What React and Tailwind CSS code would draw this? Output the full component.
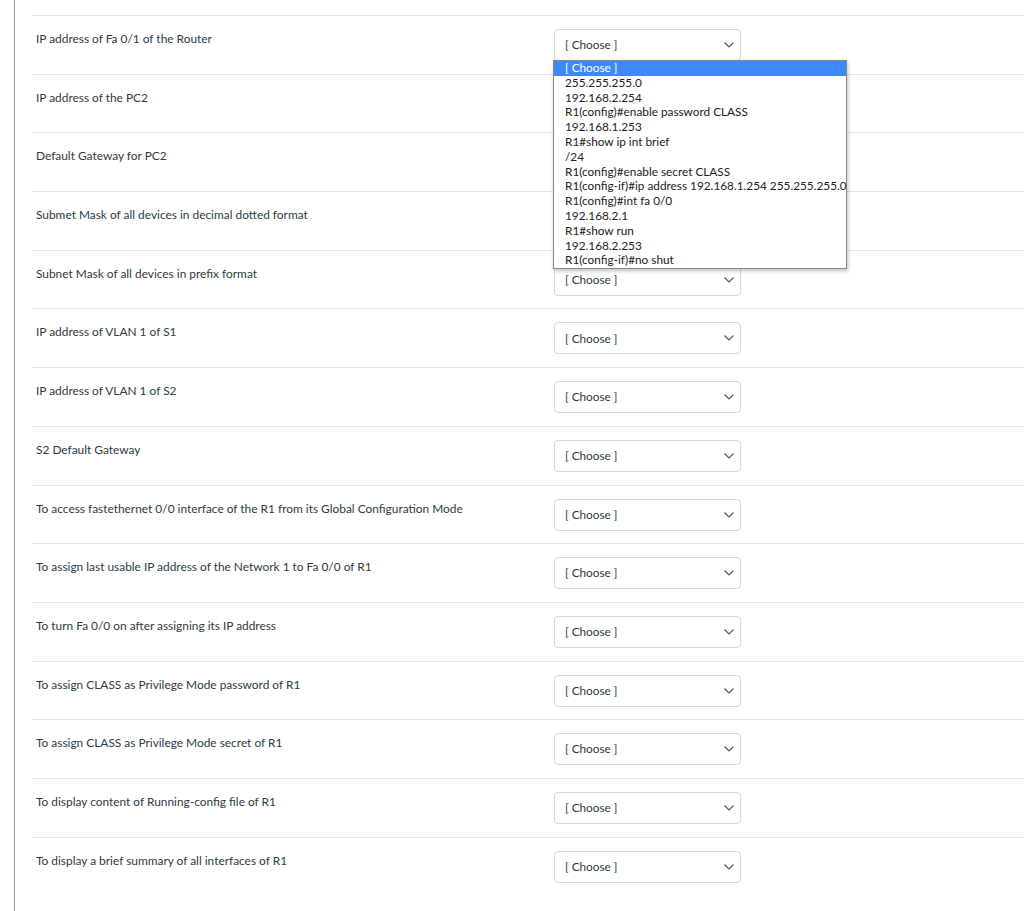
import React from 'react';

const questions = [
  'IP address of Fa 0/1 of the Router',
  'IP address of the PC2',
  'Default Gateway for PC2',
  'Submet Mask of all devices in decimal dotted format',
  'Subnet Mask of all devices in prefix format',
  'IP address of VLAN 1 of S1',
  'IP address of VLAN 1 of S2',
  'S2 Default Gateway',
  'To access fastethernet 0/0 interface of the R1 from its Global Configuration Mode',
  'To assign last usable IP address of the Network 1 to Fa 0/0 of R1',
  'To turn Fa 0/0 on after assigning its IP address',
  'To assign CLASS as Privilege Mode password of R1',
  'To assign CLASS as Privilege Mode secret of R1',
  'To display content of Running-config file of R1',
  'To display a brief summary of all interfaces of R1',
];

const options = [
  '[ Choose ]',
  '255.255.255.0',
  '192.168.2.254',
  'R1(config)#enable password CLASS',
  '192.168.1.253',
  'R1#show ip int brief',
  '/24',
  'R1(config)#enable secret CLASS',
  'R1(config-if)#ip address 192.168.1.254 255.255.255.0',
  'R1(config)#int fa 0/0',
  '192.168.2.1',
  'R1#show run',
  '192.168.2.253',
  'R1(config-if)#no shut',
];

const Chevron = () => (
  <svg width="12" height="8" viewBox="0 0 12 8" fill="none">
    <path d="M1.5 1.5 L6 6 L10.5 1.5" stroke="#4a5660" strokeWidth="1.1" />
  </svg>
);

// rows 2-4 sit fully under the open list
const Select = ({ open, hidden }) => (
  <div className="relative">
    <div className={'w-[187px] h-[32px] border border-[#d4d8db] rounded-[4px] bg-white flex items-center justify-between pl-[10px] pr-[5px] ' + (hidden ? 'invisible' : '')}>
      <span className="text-[11.8px] text-[#2d3b45]">[ Choose ]</span>
      <Chevron />
    </div>
    {open && (
      <div className="absolute left-[-1px] top-[31px] w-[294px] z-10 bg-white border border-[#8a8a8a] shadow-[1px_2px_4px_rgba(0,0,0,0.25)]">
        {options.map((o, i) => (
          <div
            key={o}
            className={
              'h-[14.8px] leading-[14.8px] text-[11.8px] pl-[11px] whitespace-nowrap ' +
              (i === 0 ? 'bg-[#3d8af7] text-white' : 'text-[#222]')
            }
          >
            {o}
          </div>
        ))}
      </div>
    )}
  </div>
);

export default function App() {
  return (
    <div className="bg-white h-[911px] overflow-hidden" style={{ fontFamily: 'Lato, "Open Sans", sans-serif' }}>
      <div className="ml-[14px] border-l border-[#9a9a9a] h-full pl-[17px] pt-[15px]">
        {questions.map((q, i) => (
          <div key={q} className="h-[58.7px] border-t border-[#e3e5e7] flex">
            <div className="w-[522px] pl-[4px] pt-[15px] text-[11.9px] leading-[15px] text-[#2d3b45]">{q}</div>
            <div className="pt-[13px]">
              <Select open={i === 0} hidden={i >= 1 && i <= 3} />
            </div>
          </div>
        ))}
      </div>
    </div>
  );
}
